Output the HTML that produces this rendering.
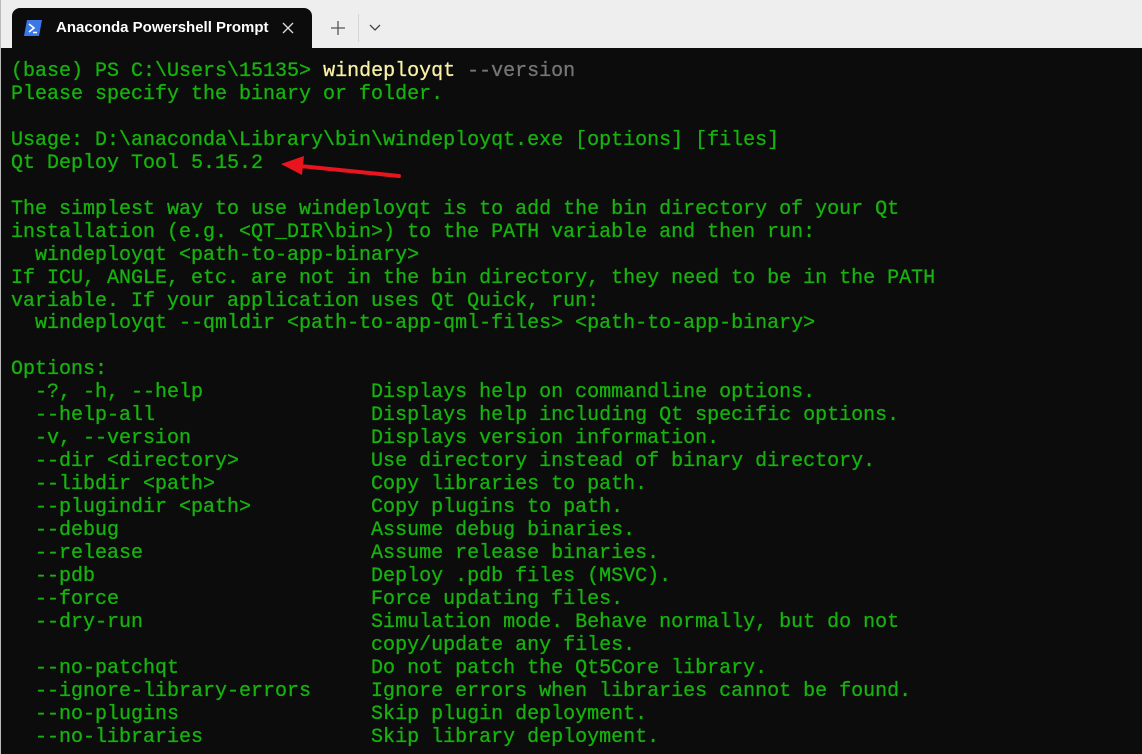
<!DOCTYPE html>
<html><head><style>
body{margin:0;width:1142px;height:754px;overflow:hidden;background:#0c0c0c;position:relative}
.bar{position:absolute;left:0;top:0;width:1142px;height:48px;background:#eeeeee}
.tab{position:absolute;left:12px;top:8px;width:300px;height:41px;background:#0c0c0c;border-radius:8px 8px 0 0}
.tab .t{position:absolute;left:44px;top:11px;color:#fff;font:bold 15px "Liberation Sans",sans-serif;}
.term{position:absolute;left:11px;top:61px;margin:0;color:#16b20e;font:20px/22.95px "Liberation Mono",monospace;white-space:pre;-webkit-text-stroke:0.3px #16b20e}
.y{color:#f9f1a5;-webkit-text-stroke:0.3px #f9f1a5}.g{color:#767676;-webkit-text-stroke:0.3px #767676}
.lb{position:absolute;left:0;top:0;width:1px;height:754px;background:#bbb}
</style></head><body>
<div class="bar"></div>
<div class="tab">
<svg style="position:absolute;left:12px;top:12px" width="18" height="16" viewBox="0 0 18 16"><polygon points="3,0 18,0 15,16 0,16" fill="#3b78e7"/><path d="M5 4 L10 8 L5 12" stroke="#fff" stroke-width="1.6" fill="none"/><path d="M9 12.5 H13" stroke="#fff" stroke-width="1.5"/></svg>
<div class="t">Anaconda Powershell Prompt</div>
<svg style="position:absolute;left:270px;top:14px" width="12" height="12"><path d="M1 1L11 11M11 1L1 11" stroke="#ddd" stroke-width="1.3"/></svg>
</div>
<svg style="position:absolute;left:330px;top:20px" width="16" height="16"><path d="M8 1V15M1 8H15" stroke="#555" stroke-width="1.3"/></svg>
<div style="position:absolute;left:358px;top:14px;width:1px;height:28px;background:#d6d6d6"></div>
<svg style="position:absolute;left:369px;top:24px" width="12" height="8"><path d="M1 1L6 6L11 1" stroke="#444" stroke-width="1.3" fill="none"/></svg>
<div class="lb"></div>
<pre class="term">(base) PS C:\Users\15135&gt; <span class="y">windeployqt</span> <span class="g">--version</span>
Please specify the binary or folder.

Usage: D:\anaconda\Library\bin\windeployqt.exe [options] [files]
Qt Deploy Tool 5.15.2

The simplest way to use windeployqt is to add the bin directory of your Qt
installation (e.g. &lt;QT_DIR\bin&gt;) to the PATH variable and then run:
  windeployqt &lt;path-to-app-binary&gt;
If ICU, ANGLE, etc. are not in the bin directory, they need to be in the PATH
variable. If your application uses Qt Quick, run:
  windeployqt --qmldir &lt;path-to-app-qml-files&gt; &lt;path-to-app-binary&gt;

Options:
  -?, -h, --help              Displays help on commandline options.
  --help-all                  Displays help including Qt specific options.
  -v, --version               Displays version information.
  --dir &lt;directory&gt;           Use directory instead of binary directory.
  --libdir &lt;path&gt;             Copy libraries to path.
  --plugindir &lt;path&gt;          Copy plugins to path.
  --debug                     Assume debug binaries.
  --release                   Assume release binaries.
  --pdb                       Deploy .pdb files (MSVC).
  --force                     Force updating files.
  --dry-run                   Simulation mode. Behave normally, but do not
                              copy/update any files.
  --no-patchqt                Do not patch the Qt5Core library.
  --ignore-library-errors     Ignore errors when libraries cannot be found.
  --no-plugins                Skip plugin deployment.
  --no-libraries              Skip library deployment.</pre>
<svg style="position:absolute;left:0;top:0" width="1142" height="754"><path d="M399 176 L300 166" stroke="#e8141e" stroke-width="4" stroke-linecap="round"/><polygon points="281,164 304,156 302,175" fill="#e8141e"/></svg>
</body></html>
